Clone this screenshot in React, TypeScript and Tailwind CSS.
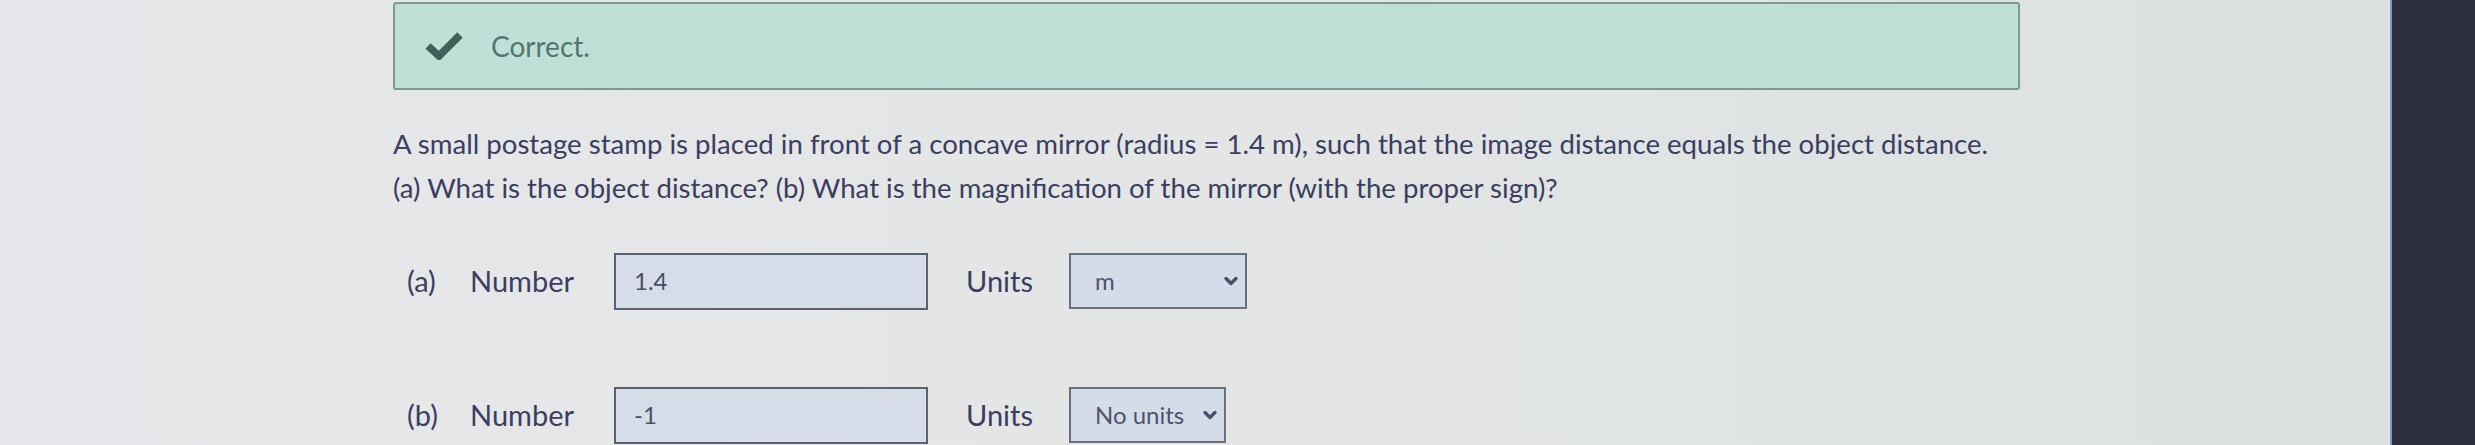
import { ChevronDown } from "lucide-react"

type Row = { tag: string; value: string; unit: string; unitW: string }

const rows: Row[] = [
  { tag: "(a)", value: "1.4", unit: "m", unitW: "w-[178px]" },
  { tag: "(b)", value: "-1", unit: "No units", unitW: "w-[157px]" },
]

function Check() {
  return (
    <svg width="38" height="28" viewBox="0 0 38 28" className="shrink-0">
      <path d="M3 14 L14 24 L35 3" fill="none" stroke="#41605a" strokeWidth="7.5" strokeLinejoin="miter" />
    </svg>
  )
}

function AnswerRow({ row }: { row: Row }) {
  return (
    <div className="flex items-center h-[58px] text-[29px] text-[#3b3e60]">
      <span className="w-[77px] pl-[14px]">{row.tag}</span>
      <span className="w-[144px]">Number</span>
      <div className="w-[314px] h-[57px] border-2 border-[#5c6070] bg-[#d7dde8] flex items-center pl-[18px] text-[24px] text-[#4a4d6c]">
        {row.value}
      </div>
      <span className="ml-[38px] w-[103px]">Units</span>
      <div className={`${row.unitW} h-[56px] border-2 border-[#6a6f80] bg-[#d4dbe9] flex items-center justify-between pl-[24px] pr-[4px] text-[24px] text-[#50536a]`}>
        <span>{row.unit}</span>
        <ChevronDown size={20} strokeWidth={4} color="#4a4e66" />
      </div>
    </div>
  )
}

export default function App() {
  return (
    <div className="w-[2475px] h-[445px] flex bg-[#e2e5e5] font-['Lato',sans-serif] overflow-hidden">
      <div className="flex-1 pl-[393px] pt-[2px] bg-gradient-to-r from-[#e6e7ea] via-[#e3e6e5] to-[#dde0e1]">
        <div className="w-[1627px] h-[88px] border-2 border-[#7d9a93] rounded-[3px] bg-[#bfe0d6] flex items-center pl-[30px] gap-[28px]">
          <Check />
          <span className="text-[28px] text-[#577570]">Correct.</span>
        </div>
        <p className="mt-[32px] text-[27.6px] leading-[44px] text-[#3b3e60] w-[1640px]">
          A small postage stamp is placed in front of a concave mirror (radius = 1.4 m), such that the image distance equals the object distance.
          <br />
          (a) What is the object distance? (b) What is the magnification of the mirror (with the proper sign)?
        </p>
        <div className="mt-[42px] flex flex-col gap-[76px]">
          {rows.map((r) => (
            <AnswerRow key={r.tag} row={r} />
          ))}
        </div>
      </div>
      <div className="w-[85px] h-full bg-[#2c2f3b] border-l-2 border-[#7e97c4]" />
    </div>
  )
}
